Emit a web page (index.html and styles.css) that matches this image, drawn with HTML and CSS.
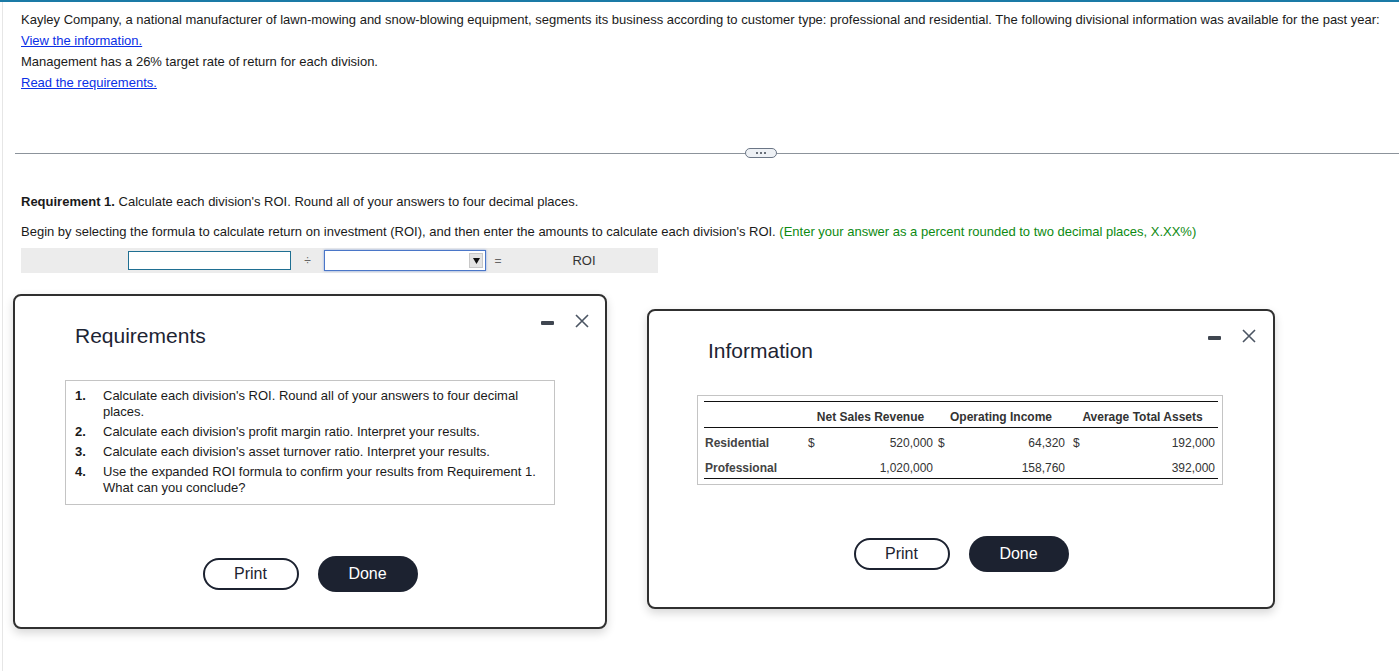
FILE: index.html
```html
<!DOCTYPE html>
<html lang="en">
<head>
<meta charset="utf-8">
<title>ROI</title>
<link rel="stylesheet" href="styles.css">
</head>
<body>
<div class="topline"></div>
<div class="page">
  <div class="intro">
    <p>Kayley Company, a national manufacturer of lawn-mowing and snow-blowing equipment, segments its business according to customer type: professional and residential. The following divisional information was available for the past year:</p>
    <p><a href="#" class="link">View the information.</a></p>
    <p>Management has a 26% target rate of return for each division.</p>
    <p><a href="#" class="link">Read the requirements.</a></p>
  </div>
  <div class="divider"><span class="more"><i></i><i></i><i></i></span></div>
  <p class="req"><b>Requirement 1.</b> Calculate each division's ROI. Round all of your answers to four decimal places.</p>
  <p class="begin">Begin by selecting the formula to calculate return on investment (ROI), and then enter the amounts to calculate each division's ROI. <span class="green">(Enter your answer as a percent rounded to two decimal places, X.XX%)</span></p>
  <div class="formula">
    <span class="field"></span>
    <span class="op">÷</span>
    <span class="select"><span class="arrow"><svg width="7" height="6" viewBox="0 0 7 6"><path d="M0 0h7L3.5 6z" fill="#111"/></svg></span></span>
    <span class="op op2">=</span>
    <span class="roi">ROI</span>
  </div>
</div>

<div class="dialog dlg-req">
  <div class="dhead">
    <h2 class="dtitle">Requirements</h2>
    <div class="controls">
      <span class="min"></span>
      <svg class="close" width="14" height="14" viewBox="0 0 14 14"><path d="M1 1L13 13M13 1L1 13" stroke="#4b5563" stroke-width="1.6" fill="none"/></svg>
    </div>
  </div>
  <div class="box reqbox">
    <ol class="reqlist">
      <li><span class="num">1.</span><span>Calculate each division's ROI. Round all of your answers to four decimal places.</span></li>
      <li><span class="num">2.</span><span>Calculate each division's profit margin ratio. Interpret your results.</span></li>
      <li><span class="num">3.</span><span>Calculate each division's asset turnover ratio. Interpret your results.</span></li>
      <li><span class="num">4.</span><span>Use the expanded ROI formula to confirm your results from Requirement 1. What can you conclude?</span></li>
    </ol>
  </div>
  <div class="btns">
    <button class="btn print">Print</button>
    <button class="btn done">Done</button>
  </div>
</div>

<div class="dialog dlg-info">
  <div class="dhead">
    <h2 class="dtitle">Information</h2>
    <div class="controls">
      <span class="min"></span>
      <svg class="close" width="14" height="14" viewBox="0 0 14 14"><path d="M1 1L13 13M13 1L1 13" stroke="#4b5563" stroke-width="1.6" fill="none"/></svg>
    </div>
  </div>
  <div class="box infobox">
    <table class="info">
      <colgroup>
        <col style="width:102px"><col style="width:12px"><col style="width:117px"><col style="width:12px"><col style="width:120px"><col style="width:14px"><col style="width:137px">
      </colgroup>
      <thead>
        <tr><th></th><th colspan="2">Net Sales Revenue</th><th colspan="2">Operating Income</th><th colspan="2">Average Total Assets</th></tr>
      </thead>
      <tbody>
        <tr><td class="lbl">Residential</td><td class="cur">$</td><td class="amt">520,000</td><td class="cur c2">$</td><td class="amt">64,320</td><td class="cur c3">$</td><td class="amt a3">192,000</td></tr>
        <tr><td class="lbl">Professional</td><td class="cur"></td><td class="amt">1,020,000</td><td class="cur"></td><td class="amt">158,760</td><td class="cur"></td><td class="amt a3">392,000</td></tr>
      </tbody>
    </table>
  </div>
  <div class="btns">
    <button class="btn print">Print</button>
    <button class="btn done">Done</button>
  </div>
</div>
</body>
</html>
```

FILE: styles.css
```css
* { box-sizing: border-box; }
html, body { margin: 0; padding: 0; background: #fff; }
body {
  font-family: "Liberation Sans", Arial, sans-serif;
  font-size: 13px;
  color: #1a1a1a;
  width: 1399px;
  height: 671px;
  overflow: hidden;
  position: relative;
}
.topline { height: 2px; background: #1a7aa6; }
.page {
  margin-left: 2px;
  border-left: 1px solid #e6e6e6;
  padding-left: 18px;
  height: 669px;
}
.intro { padding-top: 7px; }
.intro p { margin: 0; line-height: 21px; }
.link { color: #0a2fe6; text-decoration: underline; }
.divider {
  display: flex;
  align-items: center;
  height: 10px;
  margin-top: 55px;
  margin-left: -6px;
}
.divider::before { content: ""; width: 730px; border-top: 1px solid #8c939b; }
.divider::after { content: ""; flex: 1; border-top: 1px solid #8c939b; }
.more {
  width: 32px;
  height: 10px;
  border: 1px solid #6b7686;
  border-radius: 5px;
  background: #eef1f5;
  display: flex;
  align-items: center;
  justify-content: center;
  gap: 2px;
}
.more i { width: 2px; height: 2px; background: #3c4450; border-radius: 1px; }
.req { margin: 33px 0 0; line-height: 21px; }
.begin { margin: 9px 0 0; line-height: 21px; }
.green { color: #0d8a12; }
.formula {
  margin-top: 6px;
  width: 637px;
  height: 25px;
  background: #ececec;
  display: flex;
  align-items: center;
  padding-left: 107px;
}
.field {
  width: 163px;
  height: 19px;
  background: #fff;
  border: 1px solid #1f6f92;
}
.op { width: 33px; text-align: center; color: #666; font-size: 12px; }
.op2 { width: 24px; }
.select {
  width: 162px;
  height: 21px;
  background: #fff;
  border: 1px solid #4a76c8;
  box-shadow: 0 0 2px rgba(60,110,210,0.6);
  display: flex;
  justify-content: flex-end;
  align-items: stretch;
  padding: 2px;
}
.arrow {
  width: 14px;
  background: #e4e4e4;
  border: 1px solid #c8c8c8;
  display: flex;
  align-items: center;
  justify-content: center;
}
.roi { flex: 1; text-align: center; color: #333; }

.dialog {
  position: absolute;
  background: #fff;
  border: 2px solid #303030;
  border-radius: 8px;
  box-shadow: 0 4px 10px rgba(0,0,0,0.16);
  padding: 0 0 35px;
}
.dlg-req { left: 13px; top: 294px; width: 594px; }
.dlg-info { left: 647px; top: 309px; width: 628px; }
.dhead {
  height: 84px;
  display: flex;
  justify-content: space-between;
  align-items: flex-start;
  padding: 0 16px 0 60px;
}
.dtitle {
  margin: 28px 0 0;
  font-size: 21px;
  font-weight: normal;
  line-height: 24px;
  color: #1d2433;
}
.controls {
  margin-top: 18px;
  display: flex;
  align-items: center;
  gap: 21px;
  height: 14px;
}
.min {
  width: 13px;
  height: 4px;
  background: #3f4650;
  border-radius: 1px;
  margin-top: 4px;
}
.close { display: block; }
.dlg-info .dhead { padding-left: 59px; padding-right: 17px; }

.box {
  margin-left: 50px;
  border: 1px solid #c4c4c4;
}
.reqbox { width: 490px; padding: 7px 14px 8px 9px; }
.reqlist { list-style: none; margin: 0; padding: 0; }
.reqlist li { display: flex; line-height: 16px; color: #1a1a1a; }
.reqlist li + li { margin-top: 4px; }
.num { width: 28px; flex: none; font-weight: bold; }

.infobox { width: 526px; margin-left: 48px; padding: 5px 3px 5px 6px; }
.info {
  table-layout: fixed;
  width: 514px;
  border-collapse: collapse;
  font-size: 12px;
  color: #333;
  border-top: 1px solid #111;
  border-bottom: 1px solid #111;
}
.info th {
  font-weight: bold;
  text-align: center;
  padding: 8px 0 2px;
  line-height: 15px;
  border-bottom: 1px solid #111;
  white-space: nowrap;
  color: #333;
}
.info td { padding: 7px 2px 2px 0; line-height: 16px; white-space: nowrap; }
.info .lbl { font-weight: bold; padding-left: 1px; color: #444; }
.info .cur { padding-left: 2px; }
.info .c2 { padding-left: 3px; }
.info .c3 { padding-left: 6px; }
.info .amt { text-align: right; }
.info .a3 { padding-right: 3px; }

.btns {
  margin-top: 51px;
  display: flex;
  justify-content: center;
  align-items: center;
  gap: 19px;
}
.btn {
  font-family: "Liberation Sans", Arial, sans-serif;
  font-size: 16px;
  border-radius: 18px;
  cursor: pointer;
}
.print {
  width: 96px;
  height: 32px;
  background: #fff;
  color: #1c2230;
  border: 2px solid #1c2230;
}
.done {
  width: 100px;
  height: 36px;
  background: #1c2230;
  color: #fff;
  border: none;
}
```
